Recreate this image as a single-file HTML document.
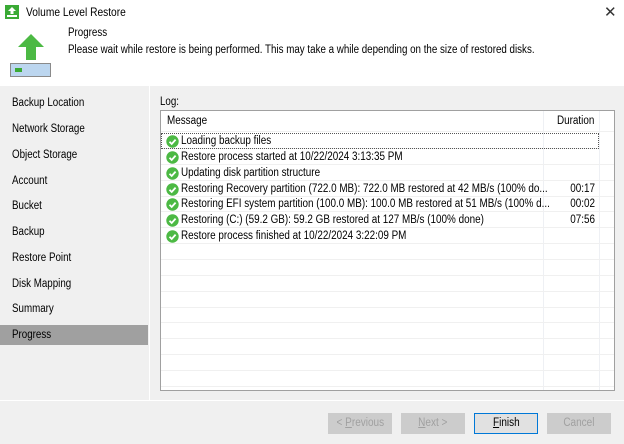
<!DOCTYPE html><html><head><style>
*{box-sizing:border-box;margin:0;padding:0}
body{width:624px;height:444px;background:#f0f0f0;font-family:"Liberation Sans",sans-serif;font-size:11.5px;color:#000;position:relative;overflow:hidden}
.a{position:absolute;white-space:nowrap}
.n{display:inline-block;transform:scaleX(.85);transform-origin:0 0}
.hdr{left:0;top:0;width:624px;height:86px;background:#fff}
.nav{left:12px}
.sel{left:0;top:325px;width:148px;height:20px;background:#a0a0a0}
.box{left:160px;top:110px;width:455px;height:281px;background:#fff;border:1px solid #a0a0a0}
.row{position:absolute;left:0;width:453px;height:16px;border-bottom:1px solid #f0f0f0}
.ck{position:absolute;left:5px;top:2px;width:13px;height:13px}
.t{position:absolute;left:20px;top:2px;white-space:nowrap;transform:scaleX(.86);transform-origin:0 0}
.d{position:absolute;left:389px;top:2px;width:45px;text-align:right;transform:scaleX(.86);transform-origin:100% 0}
.btn{top:413px;width:64px;height:21px;border:1px solid #cccccc;background:#cccccc;color:#a0a0a0;text-align:center;line-height:19px}
.btn span{display:inline-block;transform:scaleX(.87)}
</style></head><body>
<div class="a hdr"></div>
<svg class="a" style="left:5px;top:5px" width="14" height="14"><rect x="0" y="0" width="14" height="14" fill="#3aaa35"/><path d="M7 2 L11 6 H8.5 V9 H5.5 V6 H3Z" fill="#fff"/><rect x="2" y="10" width="10" height="2" fill="#fff"/></svg>
<div class="a" style="left:26px;top:5px;font-size:12px"><span class="n">Volume Level Restore</span></div>
<div class="a" style="left:604px;top:3px;font-size:15px;color:#333">✕</div>
<svg class="a" style="left:9px;top:33px" width="44" height="45"><path d="M22 1 L35 14 H27 V27 H17 V14 H9Z" fill="#4cb944"/><rect x="1.5" y="30.5" width="40" height="13" fill="#bcd6ef" stroke="#8a8a8a"/><rect x="6" y="35" width="7" height="4" fill="#3aaa35"/></svg>
<div class="a" style="left:68px;top:27px"><span class="n">Progress</span></div>
<div class="a" style="left:68px;top:44px"><span class="n">Please wait while restore is being performed. This may take a while depending on the size of restored disks.</span></div>
<div class="a" style="left:149px;top:86px;width:1px;height:315px;background:#fff"></div>
<div class="a sel"></div>
<div class="a nav" style="top:97px"><span class="n">Backup Location</span></div>
<div class="a nav" style="top:123px"><span class="n">Network Storage</span></div>
<div class="a nav" style="top:149px"><span class="n">Object Storage</span></div>
<div class="a nav" style="top:175px"><span class="n">Account</span></div>
<div class="a nav" style="top:200px"><span class="n">Bucket</span></div>
<div class="a nav" style="top:226px"><span class="n">Backup</span></div>
<div class="a nav" style="top:252px"><span class="n">Restore Point</span></div>
<div class="a nav" style="top:278px"><span class="n">Disk Mapping</span></div>
<div class="a nav" style="top:303px"><span class="n">Summary</span></div>
<div class="a nav" style="top:329px"><span class="n">Progress</span></div>
<div class="a" style="left:160px;top:96px"><span class="n">Log:</span></div>
<div class="a box">
<div style="position:absolute;left:382px;top:0;width:1px;height:279px;background:#eef0f4"></div>
<div style="position:absolute;left:438px;top:0;width:1px;height:279px;background:#eef0f4"></div>
<div class="row" style="top:0;height:21px;border-bottom:1px solid #f0f0f0"><span class="t" style="left:6px;top:4px">Message</span><span class="t" style="left:396px;top:4px">Duration</span></div>
<div id="rows"></div>
</div>
<div class="a" style="left:0;top:400px;width:624px;height:1px;background:#fff"></div>
<div class="a btn" style="left:328px"><span>&lt; <u>P</u>revious</span></div>
<div class="a btn" style="left:401px"><span><u>N</u>ext &gt;</span></div>
<div class="a btn" style="left:474px;background:#e1e1e1;border:1px solid #0078d7;color:#000"><span><u>F</u>inish</span></div>
<div class="a btn" style="left:547px"><span>Cancel</span></div>
<script>
var r=[["Loading backup files",""],["Restore process started at 10/22/2024 3:13:35 PM",""],["Updating disk partition structure",""],["Restoring Recovery partition (722.0 MB): 722.0 MB restored at 42 MB/s (100% do...","00:17"],["Restoring EFI system partition (100.0 MB): 100.0 MB restored at 51 MB/s (100% d...","00:02"],["Restoring (C:) (59.2 GB): 59.2 GB restored at 127 MB/s (100% done)","07:56"],["Restore process finished at 10/22/2024 3:22:09 PM",""],["",""],["",""],["",""],["",""],["",""],["",""],["",""],["",""],["",""]];
var h="";r.forEach(function(x,i){var top=22+i*15.85;var ck=x[0]?'<svg class="ck" viewBox="0 0 13 13"><circle cx="6.5" cy="6.5" r="6.2" fill="#4cb944"/><path d="M3.5 6.8 L5.7 9 L9.6 4.6" stroke="#fff" stroke-width="1.8" fill="none"/></svg>':'';
var b=i==0?'outline:1px dotted #555;outline-offset:-1px;width:438px;':'';
h+='<div class="row" style="top:'+top+'px;'+b+'">'+ck+'<span class="t">'+x[0]+'</span><span class="d">'+x[1]+'</span></div>';});
document.getElementById("rows").innerHTML=h;
</script>
</body></html>
